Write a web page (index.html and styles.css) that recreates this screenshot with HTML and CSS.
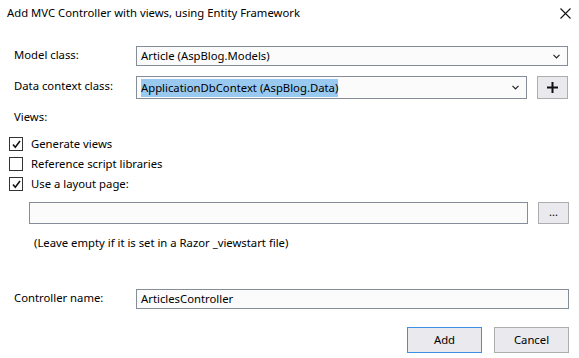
FILE: index.html
```html
<!DOCTYPE html>
<html>
<head>
<meta charset="utf-8">
<link rel="stylesheet" href="styles.css">
</head>
<body>
<div class="dialog">
  <div class="titlebar">
    <span class="title">Add MVC Controller with views, using Entity Framework</span>
    <svg class="close" width="11" height="11" viewBox="0 0 11 11"><path d="M0.5 0.5 L10.5 10.5 M10.5 0.5 L0.5 10.5" stroke="#111" stroke-width="1.1" fill="none"/></svg>
  </div>
  <div class="content">
    <div class="row row-model">
      <label class="label">Model class:</label>
      <div class="combo combo-model">
        <span class="combo-text">Article (AspBlog.Models)</span>
        <svg class="chev" width="7" height="5" viewBox="0 0 7 5"><path d="M0.5 0.8 L3.5 3.8 L6.5 0.8" stroke="#222" stroke-width="1.2" fill="none"/></svg>
      </div>
    </div>
    <div class="row row-data">
      <label class="label">Data context class:</label>
      <div class="combo combo-data">
        <span class="combo-text"><span class="sel">ApplicationDbContext (AspBlog.Data)</span></span>
        <svg class="chev" width="7" height="5" viewBox="0 0 7 5"><path d="M0.5 0.8 L3.5 3.8 L6.5 0.8" stroke="#222" stroke-width="1.2" fill="none"/></svg>
      </div>
      <button class="btn btn-small">
        <svg width="11" height="11" viewBox="0 0 11 11"><path d="M5.5 0 V11 M0 5.5 H11" stroke="#111" stroke-width="2" fill="none"/></svg>
      </button>
    </div>
    <div class="views-label">Views:</div>
    <div class="checks">
      <div class="check-row">
        <span class="box"><svg width="11" height="11" viewBox="0 0 11 11"><path d="M2 5.5 L4.3 8.2 L9 2" stroke="#111" stroke-width="1.6" fill="none"/></svg></span>
        <span class="check-text">Generate views</span>
      </div>
      <div class="check-row">
        <span class="box"></span>
        <span class="check-text">Reference script libraries</span>
      </div>
      <div class="check-row">
        <span class="box"><svg width="11" height="11" viewBox="0 0 11 11"><path d="M2 5.5 L4.3 8.2 L9 2" stroke="#111" stroke-width="1.6" fill="none"/></svg></span>
        <span class="check-text">Use a layout page:</span>
      </div>
    </div>
    <div class="row row-layout">
      <div class="textbox textbox-layout"></div>
      <button class="btn btn-small btn-dots">...</button>
    </div>
    <div class="hint">(Leave empty if it is set in a Razor _viewstart file)</div>
    <div class="row row-controller">
      <label class="label">Controller name:</label>
      <div class="textbox textbox-controller">ArticlesController</div>
    </div>
    <div class="actions">
      <button class="btn btn-action btn-default">Add</button>
      <button class="btn btn-action">Cancel</button>
    </div>
  </div>
</div>
</body>
</html>
```
FILE: styles.css
```css
* { box-sizing: border-box; }
html, body {
  margin: 0;
  padding: 0;
  background: #ffffff;
}
body {
  font-family: "Noto Sans", "Open Sans", sans-serif;
  font-size: 11.3px;
  color: #000;
  width: 579px;
  height: 358px;
  overflow: hidden;
}
.dialog {
  width: 579px;
  height: 358px;
}
.titlebar {
  height: 28px;
  display: flex;
  align-items: center;
  justify-content: space-between;
  padding: 0 8px 2px 7px;
}
.title {
  line-height: 16px;
  margin-top: -1px;
}
.close { display: block; }
.content {
  padding: 0 10px 0 14px;
  display: flex;
  flex-direction: column;
}
.row {
  display: flex;
  align-items: center;
}
.label {
  width: 122px;
  flex: none;
  line-height: 16px;
  margin-top: -3px;
}
.combo {
  display: flex;
  align-items: center;
  justify-content: space-between;
  border: 1px solid #858d99;
  background: #fbfbfb;
  padding: 0 7px 0 4px;
}
.row-model { margin-top: 18px; }
.combo-model {
  height: 20px;
  width: 432px;
}
.row-data { margin-top: 10px; }
.combo-data {
  height: 23px;
  width: 391px;
}
.combo-text { line-height: 16px; }
.sel {
  background: #99c9ef;
  padding: 1px 0 2px;
}
.chev { display: block; flex: none; }
.btn {
  font-family: inherit;
  font-size: 11.3px;
  color: #000;
  background: #e9e9ee;
  border: 1px solid #adadad;
  padding: 0;
  display: flex;
  align-items: center;
  justify-content: center;
}
.btn-small {
  width: 31px;
  height: 23px;
  margin-left: 10px;
}
.views-label {
  margin-top: 10px;
  line-height: 16px;
}
.checks {
  margin-left: -5px;
  margin-top: 12px;
  display: flex;
  flex-direction: column;
  gap: 6px;
}
.check-row {
  display: flex;
  align-items: center;
  height: 14px;
}
.box {
  width: 14px;
  height: 14px;
  border: 1px solid #333;
  background: #fff;
  display: flex;
  align-items: center;
  justify-content: center;
  flex: none;
}
.box svg { display: block; }
.check-text {
  margin-left: 8px;
  line-height: 16px;
  margin-top: -1px;
}
.row-layout {
  margin-top: 11px;
  padding-left: 15px;
}
.textbox {
  border: 1px solid #858d99;
  background: #fbfbfb;
  line-height: 16px;
  padding: 0 4px;
  display: flex;
  align-items: center;
}
.textbox-layout {
  width: 499px;
  height: 22px;
}
.btn-dots {
  height: 22px;
  font-size: 11px;
  padding-bottom: 3px;
}
.hint {
  margin-top: 11px;
  padding-left: 20px;
  line-height: 16px;
}
.row-controller { margin-top: 38px; }
.textbox-controller {
  width: 433px;
  height: 20px;
}
.actions {
  margin-top: 18px;
  display: flex;
  justify-content: flex-end;
  gap: 12px;
}
.btn-action {
  width: 75px;
  height: 26px;
  line-height: 16px;
}
.btn-default {
  border-color: #3c8fe3;
}
```
